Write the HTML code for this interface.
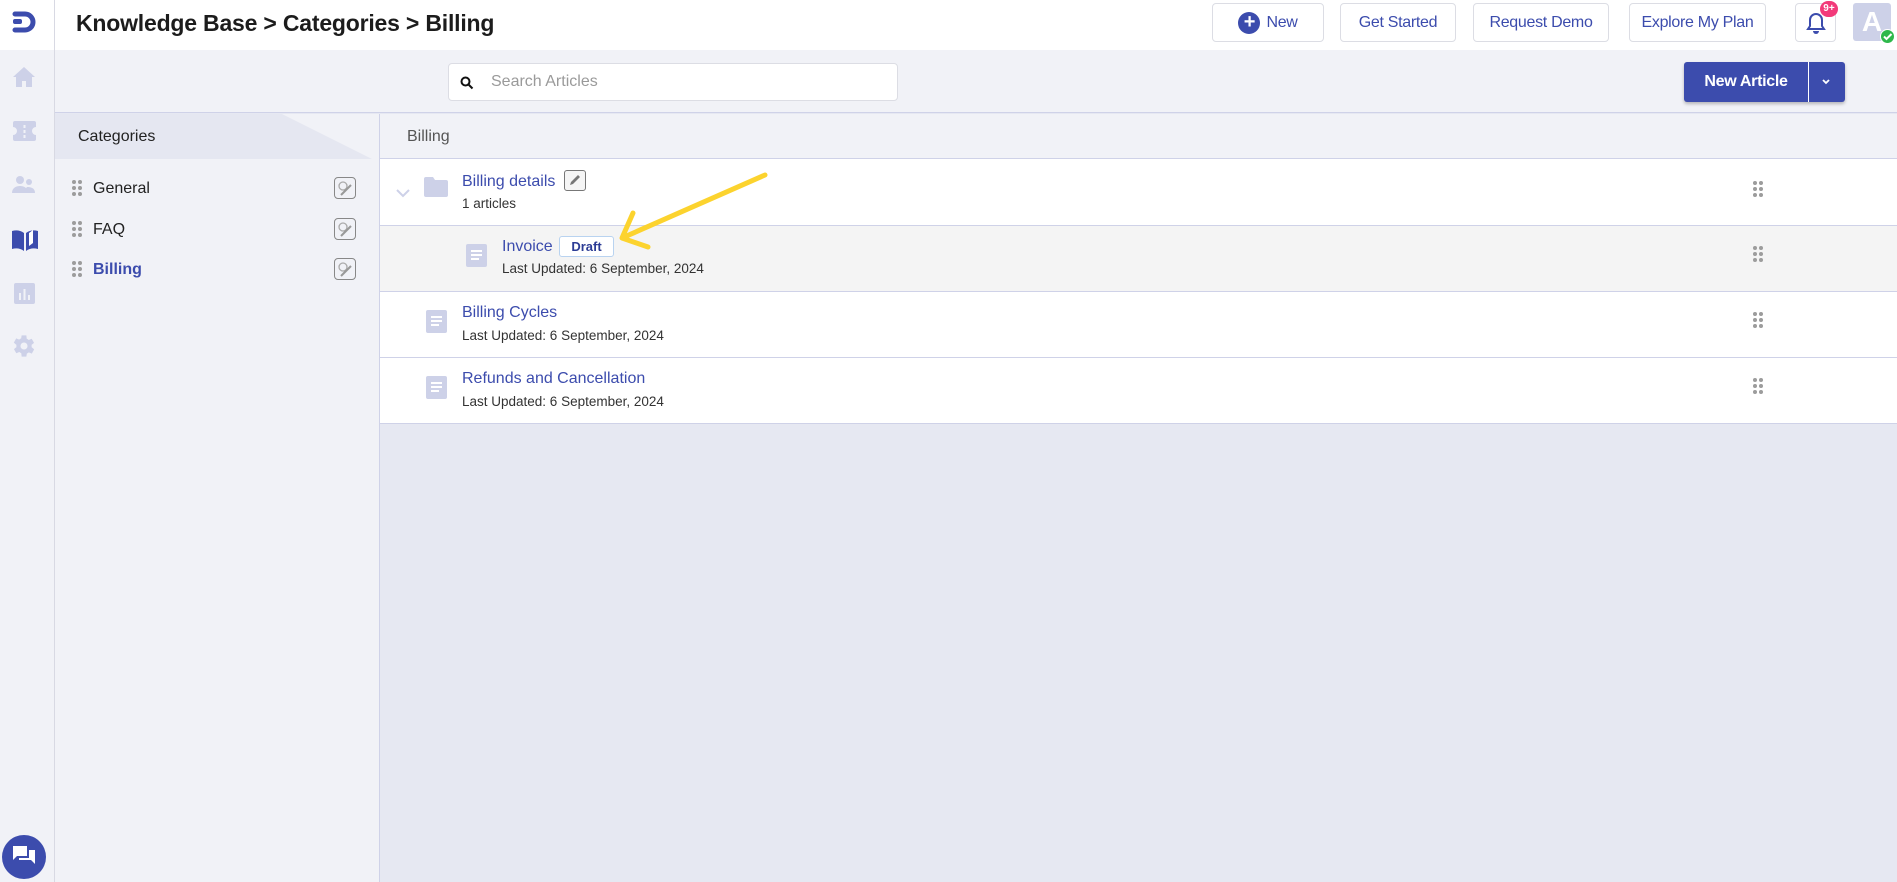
<!DOCTYPE html>
<html><head><meta charset="utf-8">
<style>
*{box-sizing:border-box;margin:0;padding:0}
body{width:1897px;height:882px;overflow:hidden;background:#e6e8f2;font-family:"Liberation Sans",Arial,sans-serif;position:relative}
.abs{position:absolute}
.side{left:0;top:0;width:55px;height:882px;background:#f1f2f7;border-right:1px solid #d8d9e3}
.top{left:55px;top:0;width:1842px;height:50px;background:#fff}
.logoarea{left:0;top:0;width:54px;height:50px;background:#fff}
.title{left:76px;top:10px;font-size:23px;font-weight:bold;color:#1c1c1c;letter-spacing:-0.2px}
.btn{top:3px;height:39px;border:1px solid #dcdde4;border-radius:4px;background:#fff;color:#3c4cad;font-size:16px;display:flex;align-items:center;justify-content:center;letter-spacing:-0.3px}
.bar2{left:55px;top:50px;width:1842px;height:63px;background:#f1f2f7;border-bottom:1px solid #cfd2e8}
.search{left:448px;top:63px;width:450px;height:38px;background:#fff;border:1px solid #dcdde4;border-radius:4px}
.catpanel{left:55px;top:114px;width:325px;height:768px;background:#f1f2f7;border-right:1px solid #cfd2e8}
.row{position:absolute;left:380px;width:1517px;background:#fff;border-bottom:1px solid #cfd2e8}
.link{color:#3c4cad;font-size:16px}
.sub{color:#333;font-size:13.5px}
.dots{position:absolute;width:10px;height:15px}
.dots i{position:absolute;width:4px;height:4px;border-radius:50%;background:#9c9c9c}
.doc{position:absolute;width:21px;height:23px;background:#cdd1e8;border-radius:2px}
.doc b{position:absolute;left:5px;height:2px;background:#fff}
.cat{position:absolute;left:93px;font-size:16px;color:#222}
.edit{position:absolute;left:334px;width:22px;height:22px;border:1px solid #888;border-radius:4px}
</style></head><body>
<div class="abs side"></div>
<div class="abs logoarea"></div>
<svg class="abs" style="left:12px;top:10px" width="26" height="24" viewBox="0 0 26 24"><path d="M3 4h10a8 8 0 0 1 0 16H3" fill="none" stroke="#3c4cad" stroke-width="5" stroke-linecap="round"/><rect x="1" y="9" width="9" height="5" rx="2" fill="#3c4cad"/></svg>
<svg class="abs" style="left:12px;top:66px" width="24" height="22" viewBox="0 0 24 22"><path d="M12 1L1 11h3v10h6v-6h4v6h6V11h3z" fill="#cdd1e8"/></svg>
<svg class="abs" style="left:13px;top:121px" width="23" height="20" viewBox="0 0 23 20"><path d="M2 0h19a2 2 0 0 1 2 2v4a4 4 0 0 0 0 8v4a2 2 0 0 1-2 2H2a2 2 0 0 1-2-2v-4a4 4 0 0 0 0-8V2a2 2 0 0 1 2-2z" fill="#cdd1e8"/><rect x="10.5" y="4" width="2" height="3" fill="#f1f2f7"/><rect x="10.5" y="9" width="2" height="3" fill="#f1f2f7"/><rect x="10.5" y="14" width="2" height="3" fill="#f1f2f7"/></svg>
<svg class="abs" style="left:12px;top:176px" width="24" height="18" viewBox="0 0 24 18"><circle cx="8" cy="4" r="4" fill="#cdd1e8"/><circle cx="17" cy="6" r="3" fill="#cdd1e8"/><path d="M0 17c0-5 4-7 8-7s8 2 8 7z" fill="#cdd1e8"/><path d="M13 17c0-3 1-5 2-6 4 0 8 1 8 6z" fill="#cdd1e8"/></svg>
<svg class="abs" style="left:12px;top:228px" width="26" height="24" viewBox="0 0 26 24"><path d="M0 3c4-1 8-1 12 2v18c-4-3-8-3-12-2z" fill="#3c4cad"/><path d="M14 5c4-3 8-3 12-2v18c-4-1-8-1-12 2z" fill="#3c4cad"/><path d="M17 5l4-3v13l-4 3z" fill="#fff"/></svg>
<svg class="abs" style="left:14px;top:283px" width="21" height="21" viewBox="0 0 21 21"><rect width="21" height="21" rx="2" fill="#cdd1e8"/><rect x="5" y="10" width="2" height="7" fill="#f1f2f7"/><rect x="9.5" y="6" width="2" height="11" fill="#f1f2f7"/><rect x="14" y="12" width="2" height="5" fill="#f1f2f7"/></svg>
<svg class="abs" style="left:11px;top:333px" width="26" height="26" viewBox="2 1 22 22"><path fill="#cdd1e8" d="M19.4 13a7.5 7.5 0 0 0 0-2l2.1-1.6-2-3.5-2.5 1a7 7 0 0 0-1.7-1L15 3h-4l-.4 2.6a7 7 0 0 0-1.7 1l-2.5-1-2 3.5L6.6 11a7.5 7.5 0 0 0 0 2l-2.1 1.6 2 3.5 2.5-1a7 7 0 0 0 1.7 1L11 21h4l.4-2.6a7 7 0 0 0 1.7-1l2.5 1 2-3.5zM13 15a3 3 0 1 1 0-6 3 3 0 0 1 0 6z"/></svg>
<div class="abs" style="left:2px;top:835px;width:44px;height:44px;border-radius:50%;background:#3c4cad"></div>
<svg class="abs" style="left:12px;top:845px" width="24" height="22" viewBox="0 0 24 22"><path d="M1 1h14v10H5l-4 4z" fill="#fff"/><path d="M17 5h6v14l-4-4H7v-2h10z" fill="#fff"/></svg>

<div class="abs top"></div>
<div class="abs title">Knowledge Base &gt; Categories &gt; Billing</div>
<div class="abs btn" style="left:1212px;width:112px"><span style="display:inline-block;width:22px;height:22px;border-radius:50%;background:#3c4cad;color:#fff;font-weight:bold;font-size:20px;line-height:21px;text-align:center;margin-right:6px">+</span>New</div>
<div class="abs btn" style="left:1340px;width:116px">Get Started</div>
<div class="abs btn" style="left:1473px;width:136px">Request Demo</div>
<div class="abs btn" style="left:1629px;width:137px">Explore My Plan</div>
<div class="abs btn" style="left:1795px;width:41px"><svg width="20" height="22" viewBox="0 0 20 22"><path d="M10 2a6 6 0 0 0-6 6v6l-2 3h16l-2-3V8a6 6 0 0 0-6-6z" fill="none" stroke="#3c4cad" stroke-width="2"/><path d="M7 19a3 3 0 0 0 6 0z" fill="#3c4cad"/></svg></div>
<div class="abs" style="left:1820px;top:1px;width:18px;height:16px;border-radius:8px;background:#f23a7a;color:#fff;font-size:10px;font-weight:bold;text-align:center;line-height:16px">9+</div>
<div class="abs" style="left:1853px;top:3px;width:38px;height:38px;border-radius:3px;background:#cdd1e8;color:#fff;font-size:28px;font-weight:bold;text-align:center;line-height:38px">A</div>
<div class="abs" style="left:1880px;top:29px;width:15px;height:15px;border-radius:50%;background:#2eb84b;border:1px solid #fff"><svg width="13" height="13" viewBox="0 0 13 13" style="display:block"><path d="M3 6.5l2.5 2.5 5-5" stroke="#fff" stroke-width="2" fill="none"/></svg></div>

<div class="abs bar2"></div>
<div class="abs search"><svg class="abs" style="left:11px;top:12px" width="14" height="14" viewBox="0 0 14 14"><circle cx="5.5" cy="5.5" r="4" fill="none" stroke="#111" stroke-width="2"/><path d="M8.5 8.5l4 4" stroke="#111" stroke-width="2"/></svg><span class="abs" style="left:42px;top:9px;font-size:16px;color:#9a9a9a">Search Articles</span></div>
<div class="abs" style="left:1684px;top:62px;width:161px;height:40px;background:#3c4cad;border-radius:3px;box-shadow:0 2px 3px rgba(0,0,0,.25)"></div>
<div class="abs" style="left:1684px;top:62px;width:124px;height:40px;color:#fff;font-weight:bold;font-size:16px;text-align:center;line-height:40px;letter-spacing:-0.3px">New Article</div>
<div class="abs" style="left:1808px;top:62px;width:1px;height:40px;background:#fff"></div>
<svg class="abs" style="left:1821px;top:78px" width="10" height="8" viewBox="0 0 10 8"><path d="M2 2l3 3 3-3" stroke="#fff" stroke-width="1.8" fill="none"/></svg>

<div class="abs catpanel"></div>
<svg class="abs" style="left:55px;top:114px" width="325" height="45"><polygon points="0,0 227,0 317,45 0,45" fill="#e5e7f1"/></svg>
<div class="abs" style="left:78px;top:128px;font-size:16px;color:#222">Categories</div>

<div class="cat" style="top:180px">General</div>
<div class="cat" style="top:221px">FAQ</div>
<div class="cat" style="top:261px;color:#3c4cad;font-weight:bold">Billing</div>
<div class="dots" style="left:72px;top:180px"><i style="left:0;top:0"></i><i style="left:6px;top:0"></i><i style="left:0;top:6px"></i><i style="left:6px;top:6px"></i><i style="left:0;top:12px"></i><i style="left:6px;top:12px"></i></div>
<div class="dots" style="left:72px;top:221px"><i style="left:0;top:0"></i><i style="left:6px;top:0"></i><i style="left:0;top:6px"></i><i style="left:6px;top:6px"></i><i style="left:0;top:12px"></i><i style="left:6px;top:12px"></i></div>
<div class="dots" style="left:72px;top:261px"><i style="left:0;top:0"></i><i style="left:6px;top:0"></i><i style="left:0;top:6px"></i><i style="left:6px;top:6px"></i><i style="left:0;top:12px"></i><i style="left:6px;top:12px"></i></div>
<div class="edit" style="top:177px"><svg width="20" height="20" viewBox="0 0 20 20"><circle cx="8" cy="8" r="4" fill="none" stroke="#aaa" stroke-width="1.3"/><path d="M6 17l10-10" stroke="#999" stroke-width="2"/></svg></div>
<div class="edit" style="top:218px"><svg width="20" height="20" viewBox="0 0 20 20"><circle cx="8" cy="8" r="4" fill="none" stroke="#aaa" stroke-width="1.3"/><path d="M6 17l10-10" stroke="#999" stroke-width="2"/></svg></div>
<div class="edit" style="top:258px"><svg width="20" height="20" viewBox="0 0 20 20"><circle cx="8" cy="8" r="4" fill="none" stroke="#aaa" stroke-width="1.3"/><path d="M6 17l10-10" stroke="#999" stroke-width="2"/></svg></div>

<div class="abs" style="left:380px;top:114px;width:1517px;height:45px;background:#f1f2f7;border-bottom:1px solid #cfd2e8"></div>
<div class="abs" style="left:407px;top:128px;font-size:16px;color:#555">Billing</div>

<div class="row" style="top:159px;height:67px">
 <svg class="abs" style="left:16px;top:30px" width="14" height="9" viewBox="0 0 14 9"><path d="M1 1l6 6 6-6" stroke="#cdd1e8" stroke-width="2" fill="none"/></svg>
 <svg class="abs" style="left:44px;top:18px" width="24" height="20" viewBox="0 0 24 20"><path d="M0 2a2 2 0 0 1 2-2h7l2 3h11a2 2 0 0 1 2 2v13a2 2 0 0 1-2 2H2a2 2 0 0 1-2-2z" fill="#cdd1e8"/></svg>
 <div class="abs link" style="left:82px;top:14px">Billing details</div>
 <div class="abs" style="left:184px;top:11px;width:22px;height:21px;border:1px solid #777;border-radius:3px;background:#f5f5f5"><svg width="20" height="19" viewBox="0 0 20 19"><path d="M5 14l1-3 7-7 2 2-7 7z" fill="#777"/></svg></div>
 <div class="abs sub" style="left:82px;top:37px">1 articles</div>
 <div class="dots" style="left:1373px;top:22px"><i style="left:0;top:0"></i><i style="left:6px;top:0"></i><i style="left:0;top:6px"></i><i style="left:6px;top:6px"></i><i style="left:0;top:12px"></i><i style="left:6px;top:12px"></i></div>
</div>
<div class="row" style="top:226px;height:66px;background:#f4f4f4">
 <div class="doc" style="left:86px;top:18px"><b style="top:6px;width:11px"></b><b style="top:10px;width:11px"></b><b style="top:14px;width:8px"></b></div>
 <div class="abs link" style="left:122px;top:12px">Invoice</div>
 <div class="abs" style="left:179px;top:10px;width:55px;height:21px;border:1px solid #b9d3f0;border-radius:3px;background:#fff;color:#2c3c95;font-size:13px;font-weight:bold;text-align:center;line-height:19px">Draft</div>
 <div class="abs sub" style="left:122px;top:35px">Last Updated: 6 September, 2024</div>
 <div class="dots" style="left:1373px;top:20px"><i style="left:0;top:0"></i><i style="left:6px;top:0"></i><i style="left:0;top:6px"></i><i style="left:6px;top:6px"></i><i style="left:0;top:12px"></i><i style="left:6px;top:12px"></i></div>
</div>
<div class="row" style="top:292px;height:66px">
 <div class="doc" style="left:46px;top:18px"><b style="top:6px;width:11px"></b><b style="top:10px;width:11px"></b><b style="top:14px;width:8px"></b></div>
 <div class="abs link" style="left:82px;top:12px">Billing Cycles</div>
 <div class="abs sub" style="left:82px;top:36px">Last Updated: 6 September, 2024</div>
 <div class="dots" style="left:1373px;top:20px"><i style="left:0;top:0"></i><i style="left:6px;top:0"></i><i style="left:0;top:6px"></i><i style="left:6px;top:6px"></i><i style="left:0;top:12px"></i><i style="left:6px;top:12px"></i></div>
</div>
<div class="row" style="top:358px;height:66px">
 <div class="doc" style="left:46px;top:18px"><b style="top:6px;width:11px"></b><b style="top:10px;width:11px"></b><b style="top:14px;width:8px"></b></div>
 <div class="abs link" style="left:82px;top:12px">Refunds and Cancellation</div>
 <div class="abs sub" style="left:82px;top:36px">Last Updated: 6 September, 2024</div>
 <div class="dots" style="left:1373px;top:20px"><i style="left:0;top:0"></i><i style="left:6px;top:0"></i><i style="left:0;top:6px"></i><i style="left:6px;top:6px"></i><i style="left:0;top:12px"></i><i style="left:6px;top:12px"></i></div>
</div>

<svg class="abs" style="left:600px;top:160px" width="180" height="100" viewBox="0 0 180 100"><path d="M165 15L22 78M33 53L22 78 48 87" stroke="#fcd32e" stroke-width="5" stroke-linecap="round" stroke-linejoin="round" fill="none"/></svg>
</body></html>
